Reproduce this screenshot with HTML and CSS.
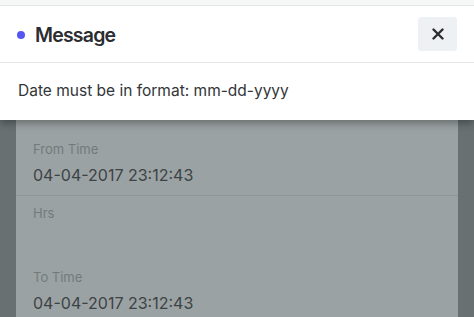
FILE: index.html
```html
<!DOCTYPE html>
<html lang="en">
<head>
<meta charset="utf-8">
<title>Message</title>
<link rel="stylesheet" href="styles.css">
</head>
<body>
<div class="screen">
  <main class="card">
    <div class="card-top"></div>
    <section class="field field-bordered">
      <div class="label">From Time</div>
      <div class="value">04-04-2017 23:12:43</div>
    </section>
    <section class="field field-compact">
      <div class="label">Hrs</div>
      <div class="value"></div>
    </section>
    <section class="field">
      <div class="label">To Time</div>
      <div class="value">04-04-2017 23:12:43</div>
    </section>
  </main>

  <div class="modal">
    <div class="modal-strip"></div>
    <header class="modal-header">
      <div class="title-wrap">
        <span class="dot"></span>
        <h1 class="title">Message</h1>
      </div>
      <button class="close" type="button" aria-label="Close">
        <svg width="12" height="12" viewBox="0 0 12 12"><path d="M1.5 1.5 L10.5 10.5 M10.5 1.5 L1.5 10.5" stroke="#2b2d30" stroke-width="2.4" stroke-linecap="round" fill="none"/></svg>
      </button>
    </header>
    <div class="modal-body">Date must be in format: mm-dd-yyyy</div>
  </div>
</div>
</body>
</html>
```
FILE: styles.css
```css
* { box-sizing: border-box; }
html, body { margin: 0; padding: 0; }
body {
  background: #687071;
  font-family: Inter, "Noto Sans", "Liberation Sans", sans-serif;
  width: 474px;
  height: 317px;
  overflow: hidden;
}
.screen {
  position: relative;
  height: 317px;
}
.card {
  margin: 0 16px;
  background: #9ba2a3;
  height: 317px;
}
.card-top { height: 130px; }
.field {
  padding: 10px 0 9px 17px;
  height: 65px;
}
.field-bordered {
  border-bottom: 1px solid #8f9698;
  height: 66px;
}
.field-compact {
  padding-top: 8px;
  height: 62px;
}
.label {
  font-size: 13px;
  line-height: 18px;
  color: #737a7c;
}
.value {
  margin-top: 6px;
  font-size: 16px;
  line-height: 22px;
  height: 22px;
  color: #3d4345;
}
.modal {
  position: absolute;
  top: 0;
  left: 0;
  right: 0;
  background: #fff;
  box-shadow: 0 3px 8px rgba(0, 0, 0, 0.35);
}
.modal-strip {
  background: #f6f7f7;
  border-bottom: 1px solid #e3e5e7;
  height: 6px;
}
.modal-header {
  height: 57px;
  display: flex;
  align-items: center;
  justify-content: space-between;
  padding: 2px 17px 0 17px;
  border-bottom: 1px solid #e4e6e8;
}
.title-wrap {
  display: flex;
  align-items: center;
  gap: 10px;
}
.dot {
  width: 8px;
  height: 8px;
  border-radius: 50%;
  background: #5555f2;
}
.title {
  margin: 0;
  font-size: 19.5px;
  font-weight: 600;
  letter-spacing: -0.8px;
  color: #2b2d30;
  line-height: 24px;
}
.close {
  width: 39px;
  height: 34px;
  margin-top: -3px;
  border: 0;
  border-radius: 3px;
  background: #eef1f4;
  display: flex;
  align-items: center;
  justify-content: center;
  padding: 0;
}
.modal-body {
  height: 57px;
  padding: 18px 18px 0;
  font-size: 15.5px;
  line-height: 20px;
  color: #333538;
}
```
